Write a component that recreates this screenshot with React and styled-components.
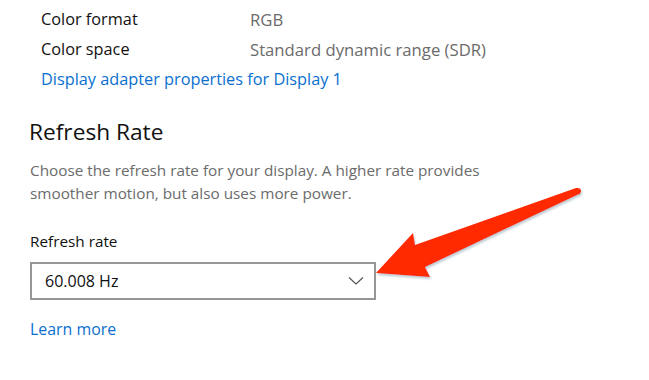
import React from "react";
import styled, { createGlobalStyle } from "styled-components";

const Global = createGlobalStyle`
  html, body { margin: 0; padding: 0; background: #fff; }
  body { font-family: "Open Sans", "Noto Sans", Arial, sans-serif; -webkit-font-smoothing: antialiased; }
`;

const Page = styled.div`
  position: relative;
  width: 649px;
  height: 380px;
  overflow: hidden;
  background: #fff;
  padding: 4px 0 0 29px;
  box-sizing: border-box;
`;

const InfoList = styled.div`
  padding-left: 12px;
  display: flex;
  flex-direction: column;
`;

const InfoRow = styled.div`
  display: grid;
  grid-template-columns: 209px 1fr;
  height: 30px;
  align-items: center;
  font-size: 16.3px;
`;

const Label = styled.span`
  color: #111;
`;

const Value = styled.span`
  color: #6b6b6b;
  font-size: 16.7px;
`;

const Link = styled.a`
  display: block;
  color: #0a6fd0;
  font-size: 16.3px;
  line-height: 30px;
  text-decoration: none;
  cursor: pointer;
`;

const Heading = styled.h2`
  margin: 23px 0 0 0;
  font-size: 22.7px;
  font-weight: 400;
  color: #111;
  line-height: 30px;
`;

const Description = styled.p`
  margin: 12px 0 0 1px;
  width: 480px;
  font-size: 15.3px;
  line-height: 23px;
  color: #6b6b6b;
`;

const FieldLabel = styled.div`
  margin: 24px 0 0 1px;
  font-size: 15.3px;
  color: #111;
  line-height: 24px;
`;

const Select = styled.div`
  margin-top: 9px;
  margin-left: 1px;
  width: 346px;
  height: 38px;
  box-sizing: border-box;
  border: 2px solid #969696;
  display: flex;
  align-items: center;
  justify-content: space-between;
  padding: 0 10px 0 13px;
  font-size: 16px;
  color: #111;
`;

const LearnMore = styled(Link)`
  margin: 17px 0 0 1px;
  font-size: 15.9px;
  line-height: 24px;
`;

const Overlay = styled.svg`
  position: absolute;
  left: 0;
  top: 0;
  pointer-events: none;
`;

export default function App() {
  return (
    <>
      <Global />
      <Page>
        <InfoList>
          <InfoRow>
            <Label>Color format</Label>
            <Value>RGB</Value>
          </InfoRow>
          <InfoRow>
            <Label>Color space</Label>
            <Value>Standard dynamic range (SDR)</Value>
          </InfoRow>
          <Link>Display adapter properties for Display 1</Link>
        </InfoList>
        <Heading>Refresh Rate</Heading>
        <Description>
          Choose the refresh rate for your display. A higher rate provides smoother motion, but also uses more power.
        </Description>
        <FieldLabel>Refresh rate</FieldLabel>
        <Select>
          <span>60.008 Hz</span>
          <svg width="16" height="10" viewBox="0 0 16 10">
            <path d="M1 1.5 L8 8 L15 1.5" fill="none" stroke="#555" strokeWidth="1.2" />
          </svg>
        </Select>
        <LearnMore>Learn more</LearnMore>
        <Overlay width="649" height="380" viewBox="0 0 649 380">
          <defs>
            <filter id="sh" x="-10%" y="-10%" width="120%" height="130%">
              <feDropShadow dx="1" dy="2" stdDeviation="1.2" floodColor="#6a8a9a" floodOpacity="0.45" />
            </filter>
          </defs>
          <path
            d="M376 273 L413 233 L415 245 L576 188 Q581.5 187.5 581 191.5 Q580.5 194 578 194.5 L425 267 L430 277 Z"
            fill="#ff2a00"
            filter="url(#sh)"
          />
        </Overlay>
      </Page>
    </>
  );
}
